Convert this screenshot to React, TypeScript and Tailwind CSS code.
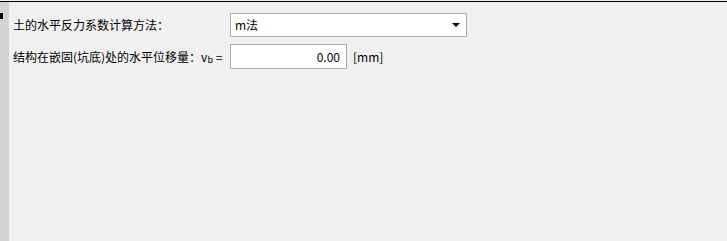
const font = { fontFamily: '"Microsoft YaHei", "Noto Sans CJK SC", "Noto Sans", sans-serif' }

export default function App() {
  return (
    <div className="flex h-[241px] w-[727px] flex-col bg-[#f0f0f0] text-[12px] text-black" style={font}>
      <div className="h-px bg-[#f0f0f0]" />
      <div className="h-px bg-black" />
      <div className="flex flex-1">
        {/* left gutter */}
        <div className="relative w-[9px] bg-[#d3d3d3]">
          <div className="absolute left-0 top-[11px] h-[6px] w-[3px] bg-black" />
        </div>

        <div className="flex flex-col gap-[7px] pl-[4px] pt-[11px]">
          <div className="flex h-[24px] items-center">
            <span className="w-[217px]">土的水平反力系数计算方法：</span>
            <div className="flex h-[24px] w-[237px] items-center justify-between border border-[#adadad] bg-white pl-[4px] pr-[6px]">
              <span>m法</span>
              <svg width="8" height="4" viewBox="0 0 8 4">
                <path d="M0 0h8L4 4z" fill="#000" />
              </svg>
            </div>
          </div>

          <div className="flex h-[25px] items-center">
            <span className="w-[217px]">
              结构在嵌固(坑底)处的水平位移量：v<span className="relative top-[1px] text-[9px]">b</span> =
            </span>
            <div className="flex h-[25px] w-[117px] items-center justify-end border border-[#adadad] bg-white pr-[6px]">
              0.00
            </div>
            <span className="ml-[6px]">[mm]</span>
          </div>
        </div>
      </div>
    </div>
  )
}
